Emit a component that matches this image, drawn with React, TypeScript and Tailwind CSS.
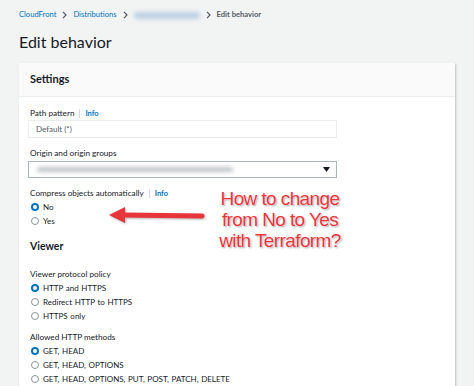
import React from 'react';

const Radio = ({ label, checked }: { label: string; checked?: boolean }) => (
  <div className="flex items-center h-[14px] gap-[4px] pl-[1px]">
    <span
      className={`w-[8px] h-[8px] rounded-full bg-white ${checked ? 'border-[2.5px] border-[#0073bb]' : 'border border-[#879596]'}`}
    />
    <span className="text-[8px] text-[#16191f] [word-spacing:0.6px]">{label}</span>
  </div>
);

const Info = () => (
  <span className="ml-[5px] pl-[5px] border-l border-[#d5dbdb] text-[7.5px] font-bold text-[#0073bb] leading-[9px]">Info</span>
);

const Label = ({ children }: { children: React.ReactNode }) => (
  <div className="flex items-center text-[8.2px] text-[#16191f] h-[12px]">{children}</div>
);

const Chevron = () => (
  <svg className="mx-[6px]" width="5" height="8" viewBox="0 0 5 8">
    <path d="M1 0.8l3 3.2-3 3.2" fill="none" stroke="#545b64" strokeWidth="1.2" />
  </svg>
);

export default function App() {
  return (
    <div className="relative w-[474px] h-[386px] overflow-hidden bg-[#f2f3f3] font-['Lato','Open_Sans',sans-serif] text-[#16191f]">
      {/* breadcrumb */}
      <div className="flex items-center h-[12px] mt-[9px] pl-[19px] text-[7.6px]">
        <span className="text-[#0073bb]">CloudFront</span>
        <Chevron />
        <span className="text-[#0073bb]">Distributions</span>
        <Chevron />
        <span className="w-[66px] h-[7px] rounded-full bg-[#bcd0e4] blur-[2px]" />
        <Chevron />
        <span className="text-[#545b64] font-bold">Edit behavior</span>
      </div>

      <h1 className="mt-[9px] pl-[19px] text-[16px] leading-[24px] text-[#16191f]">Edit behavior</h1>

      {/* card */}
      <div className="mt-[9px] ml-[19px] w-[436px] h-[330px] bg-white shadow-[1px_1px_2px_rgba(0,0,0,0.22)]">
        <div className="h-[34px] flex items-center px-[11px] bg-[#fafafa] border-b border-[#eaeded]">
          <span className="text-[11px] font-bold">Settings</span>
        </div>
        <div className="px-[11px] pt-[10px]">
          <Label>Path pattern<Info /></Label>
          <div className="mt-[1px] -ml-[2px] w-[309px] h-[18px] border border-[#eaeded] flex items-center px-[7px] text-[8px] text-[#545b64]">
            Default (*)
          </div>

          <div className="mt-[9px]"><Label>Origin and origin groups</Label></div>
          <div className="mt-[2px] -ml-[2px] w-[309px] h-[17px] border border-[#aab7b8] flex items-center justify-between pl-[8px] pr-[6px]">
            <span className="w-[196px] h-[5px] rounded-full bg-[#bfc3c6] blur-[2px]" />
            <svg width="7" height="5" viewBox="0 0 7 5"><path d="M0 0h7L3.5 5z" fill="#16191f" /></svg>
          </div>

          <div className="mt-[9px]"><Label>Compress objects automatically<Info /></Label></div>
          <div className="mt-[1px]">
            <Radio label="No" checked />
            <Radio label="Yes" />
          </div>

          <div className="mt-[11px] text-[10.5px] font-bold h-[14px] leading-[14px]">Viewer</div>

          <div className="mt-[15px]"><Label>Viewer protocol policy</Label></div>
          <div className="mt-[1px]">
            <Radio label="HTTP and HTTPS" checked />
            <Radio label="Redirect HTTP to HTTPS" />
            <Radio label="HTTPS only" />
          </div>

          <div className="mt-[8px]"><Label>Allowed HTTP methods</Label></div>
          <div className="mt-[1px]">
            <Radio label="GET, HEAD" checked />
            <Radio label="GET, HEAD, OPTIONS" />
            <Radio label="GET, HEAD, OPTIONS, PUT, POST, PATCH, DELETE" />
          </div>
        </div>
      </div>

      {/* annotation arrow */}
      <svg className="absolute left-[104px] top-[204px]" width="104" height="22" viewBox="0 0 104 22">
        <g style={{ filter: 'drop-shadow(1px 1px 1px rgba(0,0,0,0.3))' }}>
          <line x1="18" y1="11" x2="98" y2="12" stroke="#e8353b" strokeWidth="5" strokeLinecap="round" />
          <path d="M5 11 L21 3 L21 19 Z" fill="#e8353b" />
        </g>
      </svg>

      {/* annotation text */}
      <div className="absolute left-[216px] top-[188px] w-[128px] text-center font-['Liberation_Sans',Arial,sans-serif] text-[19px] leading-[21px] tracking-[-0.6px] text-[#e8353b] [text-shadow:0_0_1px_#fff,0_0_2px_#fff,1px_1px_2px_rgba(0,0,0,0.45)]">
        How to change<br />from No to Yes<br />with Terraform?
      </div>
    </div>
  );
}
